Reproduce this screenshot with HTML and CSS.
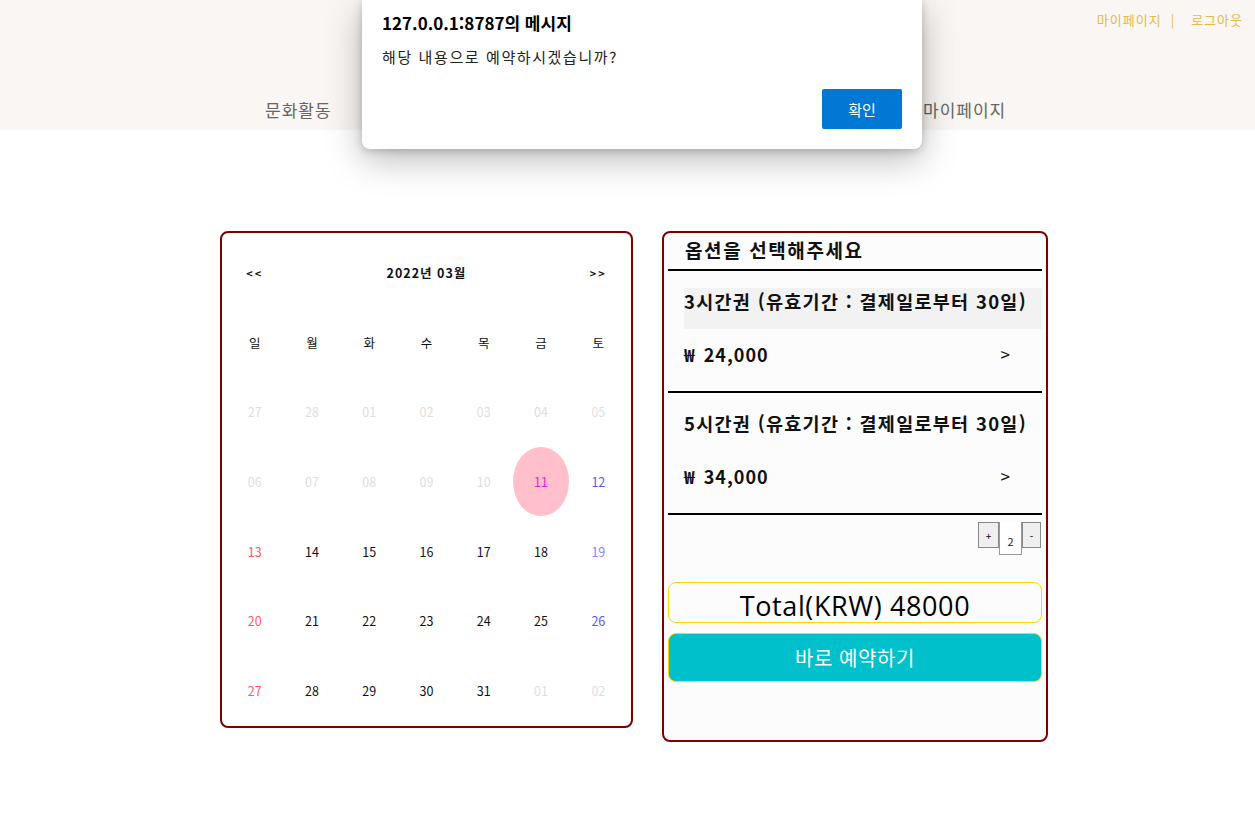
FILE: index.html
```html
<!DOCTYPE html>
<html lang="ko">
<head>
<meta charset="utf-8">
<title>예약</title>
<link rel="stylesheet" href="styles.css">
</head>
<body>
<header class="site-header">
  <div class="top-links">
    <a class="top-link">마이페이지</a>
    <span class="sep">|</span>
    <a class="top-link">로그아웃</a>
  </div>
  <nav class="main-nav">
    <a class="nav-item">문화활동</a>
    <a class="nav-item">공간대여</a>
    <a class="nav-item">커뮤니티</a>
    <a class="nav-item">고객센터</a>
    <a class="nav-item">마이페이지</a>
  </nav>
</header>

<main class="content">
  <section class="calendar">
    <div class="cal-grid">
      <div class="cal-nav">&lt;&lt;</div>
      <div class="cal-title">2022년 03월</div>
      <div class="cal-nav">&gt;&gt;</div>

      <div class="cal-cell">일</div><div class="cal-cell">월</div><div class="cal-cell">화</div><div class="cal-cell">수</div><div class="cal-cell">목</div><div class="cal-cell">금</div><div class="cal-cell">토</div>

      <div class="cal-cell off">27</div><div class="cal-cell off">28</div><div class="cal-cell off">01</div><div class="cal-cell off">02</div><div class="cal-cell off">03</div><div class="cal-cell off">04</div><div class="cal-cell off">05</div>

      <div class="cal-cell off">06</div><div class="cal-cell off">07</div><div class="cal-cell off">08</div><div class="cal-cell off">09</div><div class="cal-cell off">10</div><div class="cal-cell selected">11</div><div class="cal-cell sat">12</div>

      <div class="cal-cell sun">13</div><div class="cal-cell">14</div><div class="cal-cell">15</div><div class="cal-cell">16</div><div class="cal-cell">17</div><div class="cal-cell">18</div><div class="cal-cell sat light">19</div>

      <div class="cal-cell sun">20</div><div class="cal-cell">21</div><div class="cal-cell">22</div><div class="cal-cell">23</div><div class="cal-cell">24</div><div class="cal-cell">25</div><div class="cal-cell sat">26</div>

      <div class="cal-cell sun">27</div><div class="cal-cell">28</div><div class="cal-cell">29</div><div class="cal-cell">30</div><div class="cal-cell">31</div><div class="cal-cell off">01</div><div class="cal-cell off">02</div>
    </div>
  </section>

  <section class="options">
    <div class="opt-title">옵션을 선택해주세요</div>
    <div class="opt-item">
      <div class="opt-name hovered">3시간권 (유효기간 : 결제일로부터 30일)</div>
      <div class="opt-price"><span>₩ 24,000</span><span class="arrow">&gt;</span></div>
    </div>
    <div class="opt-item">
      <div class="opt-name">5시간권 (유효기간 : 결제일로부터 30일)</div>
      <div class="opt-price"><span>₩ 34,000</span><span class="arrow">&gt;</span></div>
    </div>
    <div class="counter">
      <button class="cnt-btn">+</button>
      <div class="cnt-val">2</div>
      <button class="cnt-btn minus">-</button>
    </div>
    <div class="total">Total(KRW) 48000</div>
    <button class="reserve">바로 예약하기</button>
  </section>
</main>

<div class="dialog">
  <div class="dlg-title">127.0.0.1:8787의 메시지</div>
  <div class="dlg-msg">해당 내용으로 예약하시겠습니까?</div>
  <div class="dlg-actions"><button class="dlg-ok">확인</button></div>
</div>
</body>
</html>
```

FILE: styles.css
```css
* { box-sizing: border-box; }
body {
  margin: 0;
  background: #ffffff;
  font-family: "Noto Sans CJK KR", "Noto Sans", sans-serif;
  color: #111;
}
.site-header {
  height: 130px;
  background: #f9f6f3;
  position: relative;
}
.top-links {
  display: flex;
  justify-content: flex-end;
  align-items: center;
  height: 38px;
  padding-right: 12px;
  font-size: 13px;
  letter-spacing: 1px;
  color: #e6b94c;
}
.top-link { color: #e6b94c; }
.sep { margin: 0 16px 0 9px; color: #e6b94c; }
.main-nav {
  display: flex;
  padding-left: 265px;
  margin-top: 60px;
  font-size: 17px;
  line-height: 24px;
  letter-spacing: 1px;
  color: #666;
}
.nav-item { width: 164.5px; color: #666; }

.content {
  display: flex;
  align-items: flex-start;
  gap: 29px;
  padding: 101px 0 0 220px;
}
.calendar {
  width: 413px;
  height: 497px;
  border: 2px solid #800000;
  border-radius: 8px;
  padding: 5px 4px 0 4px;
}
.cal-grid {
  display: grid;
  grid-template-columns: repeat(7, 1fr);
  grid-auto-rows: 69.6px;
  font-size: 12.5px;
}
.cal-nav {
  display: flex;
  align-items: center;
  justify-content: center;
  font-size: 11px;
  font-weight: bold;
  letter-spacing: 2px;
}
.cal-title {
  grid-column: span 5;
  display: flex;
  align-items: center;
  justify-content: center;
  font-weight: bold;
  font-size: 12.5px;
  letter-spacing: 1px;
}
.cal-cell {
  display: flex;
  align-items: center;
  justify-content: center;
  color: #111;
}
.cal-cell.off { color: #dedede; }
.cal-cell.sun { color: #ff5a62; }
.cal-cell.sat { color: #5b55ff; }
.cal-cell.sat.light { color: #8d7dff; }
.cal-cell.selected {
  background: #ffc0cb;
  border-radius: 50%;
  color: #f020c8;
  margin: 0 1px;
}

.options {
  width: 386px;
  height: 511px;
  border: 2px solid #800000;
  border-radius: 8px;
  background: #fcfcfc;
  padding: 0 4px;
}
.opt-title {
  height: 38px;
  line-height: 34px;
  padding-left: 17px;
  border-bottom: 2px solid #000;
  font-size: 19px;
  font-weight: bold;
  letter-spacing: 1.6px;
}
.opt-item {
  border-bottom: 2px solid #000;
  padding: 17px 0 24px 16px;
}
.opt-name {
  height: 41px;
  line-height: 26px;
  font-size: 18.5px;
  font-weight: bold;
  letter-spacing: 1.3px;
  margin-bottom: 12px;
  white-space: nowrap;
}
.opt-name.hovered { background: #f2f2f2; }
.opt-price {
  display: flex;
  justify-content: space-between;
  line-height: 26px;
  font-size: 18px;
  font-weight: bold;
  letter-spacing: 1px;
  word-spacing: 3px;
  padding-right: 31px;
}
.opt-price .arrow { font-weight: normal; font-size: 17px; }
.counter {
  display: flex;
  justify-content: flex-end;
  align-items: flex-start;
  margin-top: 7px;
  padding-right: 1px;
}
.cnt-btn {
  width: 21px;
  height: 26px;
  padding: 0;
  border: 1px solid #888;
  background: #efefef;
  font-size: 10px;
  font-family: "Noto Sans CJK KR", sans-serif;
  color: #000;
}
.cnt-btn.minus { width: 19px; }
.cnt-val {
  width: 23px;
  height: 33px;
  border: 1px solid #999;
  border-top: none;
  background: #fff;
  font-size: 11px;
  display: flex;
  align-items: center;
  justify-content: center;
  padding-top: 6px;
}
.total {
  margin-top: 27px;
  height: 41px;
  border: 1px solid #ffd700;
  border-radius: 8px;
  text-align: center;
  font-family: "Open Sans", "Noto Sans", sans-serif;
  font-size: 27px;
  letter-spacing: 0.6px;
  line-height: 45px;
  color: #000;
}
.reserve {
  display: block;
  width: 100%;
  margin-top: 10px;
  height: 49px;
  border: 1px solid #ffd700;
  border-radius: 8px;
  background: #00c0cc;
  color: #fff;
  font-family: "Noto Sans CJK KR", sans-serif;
  font-size: 20px;
  letter-spacing: 0.6px;
}

.dialog {
  position: absolute;
  left: 362px;
  top: 0;
  width: 560px;
  height: 149px;
  background: #fff;
  border-radius: 0 0 8px 8px;
  box-shadow: 0 10px 36px rgba(0,0,0,0.28), 0 2px 8px rgba(0,0,0,0.18);
  padding: 10px 20px 0 20px;
}
.dlg-title {
  font-size: 17px;
  font-weight: bold;
  line-height: 26px;
  color: #000;
}
.dlg-msg {
  margin-top: 10px;
  font-size: 15px;
  line-height: 22px;
  letter-spacing: 1.6px;
  color: #222;
}
.dlg-actions {
  display: flex;
  justify-content: flex-end;
  margin-top: 21px;
}
.dlg-ok {
  width: 80px;
  height: 40px;
  border: none;
  border-radius: 2px;
  background: #0078d4;
  color: #fff;
  font-family: "Noto Sans CJK KR", sans-serif;
  font-size: 15px;
}
```
